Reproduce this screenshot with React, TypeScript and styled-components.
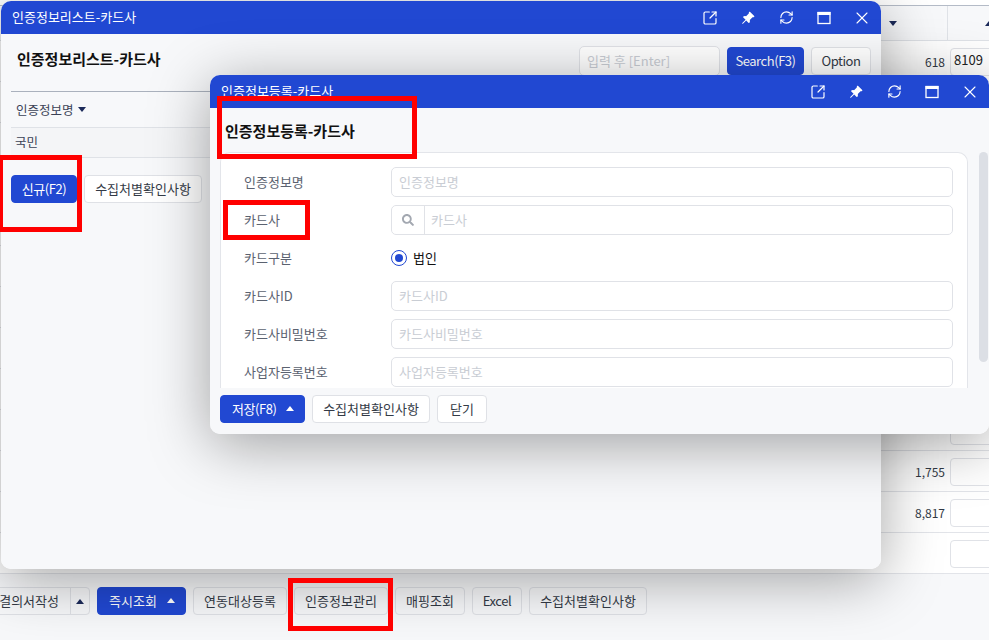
import React from 'react'
import styled, { createGlobalStyle } from 'styled-components'
import { SquareArrowOutUpRight, RefreshCw, X } from 'lucide-react'
import { BsPinAngleFill } from 'react-icons/bs'
import { FaSearch } from 'react-icons/fa'

const GlobalStyle = createGlobalStyle`
  html, body { margin: 0; padding: 0; height: 100%; overflow: hidden; background: #fff; }
  * { box-sizing: border-box; }
  body, input, button { font-family: "Noto Sans CJK KR", "Noto Sans", sans-serif; font-size: 13px; }
`

const Page = styled.div`
  position: relative;
  width: 989px;
  height: 640px;
  overflow: hidden;
  background: #fff;
  color: #333a46;
`

const Grid = styled.div`
  padding-top: 5px;
  display: flex;
  flex-direction: column;
`

const GridHeader = styled.div`
  height: 36px;
  display: flex;
  justify-content: flex-end;
  background: #f7f8fa;
  border-top: 1px solid #b4bbc7;
  border-bottom: 1px solid #dfe2e7;
`

const HeaderCell = styled.div<{ $w: number; $pad: number }>`
  width: ${p => p.$w}px;
  display: flex;
  align-items: center;
  padding-left: ${p => p.$pad}px;
  overflow: hidden;
  & + & { border-left: 1px solid #dfe2e7; }
`

const GridRow = styled.div`
  height: 41px;
  display: flex;
  justify-content: flex-end;
  align-items: center;
  gap: 5px;
  border-bottom: 1px solid #e2e4e9;
  font-size: 12px;
  padding-top: 1px;
`

const GridInput = styled.input`
  width: 46px;
  height: 28px;
  margin-right: -7px;
  padding: 0 3px 4px;
  border: 1px solid #e0e2e7;
  border-radius: 4px;
  background: #fff;
  color: #222;
  outline: none;
`

const BottomBar = styled.div`
  height: 66px;
  display: flex;
  align-items: flex-start;
  gap: 7px;
  padding: 13px 0 0 0;
  background: #f7f8fa;
`

const Win = styled.section<{ $x: number; $y: number; $w: number; $h: number }>`
  position: absolute;
  left: ${p => p.$x}px;
  top: ${p => p.$y}px;
  width: ${p => p.$w}px;
  height: ${p => p.$h}px;
  display: flex;
  flex-direction: column;
  background: #f7f8fa;
  border-radius: 10px;
  overflow: hidden;
`

const WinShadow = styled(Win)`
  overflow: visible;
  background: transparent;
  box-shadow: 0 10px 60px rgba(0, 0, 0, 0.36);
`

const TitleBar = styled.header`
  flex: none;
  height: 33px;
  display: flex;
  align-items: center;
  justify-content: space-between;
  padding: 0 9px 0 11px;
  background: #2148d2;
  color: #fff;
  font-size: 13px;
`

const TitleText = styled.span`
  margin-top: -2px;
`

const WinIcons = styled.div`
  display: flex;
  align-items: center;
  gap: 18px;
`

const IconBox = styled.span`
  width: 20px;
  height: 20px;
  display: flex;
  align-items: center;
  justify-content: center;
  color: #fff;
`

const ListTop = styled.div`
  display: flex;
  align-items: flex-start;
  justify-content: space-between;
  padding: 13px 10px 0 16px;
  height: 57px;
`

const PageTitle = styled.h2`
  margin: 0;
  font-size: 15px;
  font-weight: 700;
  color: #111;
  line-height: 24px;
`

const SearchBox = styled.div`
  display: flex;
  gap: 7px;
`

const TextInput = styled.input<{ $w?: number }>`
  width: ${p => (p.$w ? `${p.$w}px` : '100%')};
  height: 30px;
  padding: 0 7px 2px;
  border: 1px solid #e0e2e7;
  border-radius: 5px;
  background: #fff;
  outline: none;
  &::placeholder { color: #c9cdd4; }
`

const SearchInput = styled(TextInput)`
  margin-top: -1px;
`

const Btn = styled.button<{ $primary?: boolean; $caret?: boolean; $tight?: boolean; $w: number }>`
  flex: none;
  width: ${p => p.$w}px;
  height: 28px;
  padding: ${p => (p.$caret ? '0 10px 2px 11px' : '0 0 2px')};
  display: flex;
  align-items: center;
  justify-content: ${p => (p.$caret ? 'space-between' : 'center')};
  border-radius: 4px;
  border: 1px solid ${p => (p.$primary ? '#2148d2' : '#dfe1e6')};
  background: ${p => (p.$primary ? '#2148d2' : '#fff')};
  color: ${p => (p.$primary ? '#fff' : '#333a46')};
  font-size: 13px;
  letter-spacing: ${p => (p.$tight ? '-0.45px' : '0')};
`

const BarBtn = styled(Btn)`
  background: ${p => (p.$primary ? '#2148d2' : '#f7f8fa')};
`

const Split = styled.div`
  flex: none;
  display: flex;
  width: 100px;
  margin-left: -10px;
  height: 28px;
  border: 1px solid #dfe1e6;
  border-radius: 4px;
  background: #f7f8fa;
  font-size: 13px;
`

const SplitMain = styled.span`
  flex: 1;
  display: flex;
  align-items: center;
  justify-content: flex-end;
  padding: 0 11px 2px 0;
  white-space: nowrap;
`

const SplitCaret = styled.span`
  width: 19px;
  display: flex;
  align-items: center;
  justify-content: center;
  border-left: 1px solid #dfe1e6;
`

const Caret = styled.i<{ $light?: boolean; $down?: boolean }>`
  display: inline-block;
  flex: none;
  width: 0;
  height: 0;
  border-left: 4.5px solid transparent;
  border-right: 4.5px solid transparent;
  ${p => (p.$down ? 'border-top' : 'border-bottom')}: 5px solid ${p => (p.$light ? '#fff' : '#1c2a5a')};
`

const Table = styled.div`
  margin: 0 10px 0 10px;
  border-top: 1px solid #aab1bd;
`

const Th = styled.div`
  height: 36px;
  display: flex;
  align-items: center;
  gap: 4px;
  padding-left: 5px;
  background: #f7f8fa;
  border-bottom: 1px solid #dfe2e7;
  color: #3b4256;
  font-size: 12.5px;
`

const Td = styled.div`
  height: 30px;
  display: flex;
  align-items: center;
  padding: 0 0 2px 4px;
  background: #f4f5f7;
  border-bottom: 1px solid #dfe2e7;
  color: #3b4256;
  font-size: 12.5px;
`

const Actions = styled.div`
  display: flex;
  gap: 7px;
  padding: 17px 0 0 10px;
`

const FormHead = styled.div`
  height: 44px;
  flex: none;
  display: flex;
  align-items: center;
  padding: 1px 0 0 15px;
`

const FormArea = styled.div`
  position: relative;
  flex: none;
  height: 236px;
  padding: 0 21px 0 10px;
`

const Panel = styled.div`
  height: 236px;
  overflow: hidden;
  padding: 14px 14px 0 23px;
  background: #fff;
  border: 1px solid #e3e5ea;
  border-bottom: 0;
  border-radius: 10px 10px 0 0;
`

const Thumb = styled.div`
  position: absolute;
  right: 1px;
  top: 0;
  width: 9px;
  height: 210px;
  border-radius: 5px;
  background: #dcdfe5;
`

const Field = styled.div`
  display: grid;
  grid-template-columns: 147px 1fr;
  align-items: center;
  height: 30px;
  margin-bottom: 8px;
  color: #5b6270;
`

const FieldLabel = styled.span`
  padding-bottom: 2px;
`

const LookupBox = styled.div`
  height: 30px;
  display: flex;
  align-items: stretch;
  border: 1px solid #e0e2e7;
  border-radius: 5px;
  background: #fff;
`

const LookupIcon = styled.span`
  width: 33px;
  display: flex;
  align-items: center;
  justify-content: center;
  border-right: 1px solid #e0e2e7;
  color: #a3a8b1;
`

const LookupInput = styled.input`
  flex: 1;
  min-width: 0;
  padding: 0 6px 2px;
  border: 0;
  background: transparent;
  outline: none;
  &::placeholder { color: #c9cdd4; }
`

const RadioLabel = styled.label`
  display: flex;
  align-items: center;
  gap: 6px;
  color: #111;
`

const RadioText = styled.span`
  padding-bottom: 2px;
`

const RadioDot = styled.span`
  width: 16px;
  height: 16px;
  display: flex;
  align-items: center;
  justify-content: center;
  border: 1px solid #2148d2;
  border-radius: 50%;
  background: #fff;
  &::after {
    content: '';
    width: 8px;
    height: 8px;
    border-radius: 50%;
    background: #2148d2;
  }
`

const Footer = styled.div`
  display: flex;
  gap: 7px;
  padding: 7px 0 0 10px;
`

const Highlight = styled.div<{ $x: number; $y: number; $w: number; $h: number }>`
  position: absolute;
  left: ${p => p.$x}px;
  top: ${p => p.$y}px;
  width: ${p => p.$w}px;
  height: ${p => p.$h}px;
  border: 5px solid #ff0000;
`

const MaxIcon = () => (
  <svg width="14" height="14" viewBox="0 0 14 14" fill="none">
    <rect x="1" y="1.5" width="12" height="11" stroke="#fff" strokeWidth="1.3" />
    <rect x="0.5" y="1" width="13" height="3" fill="#fff" />
  </svg>
)

const WindowButtons = () => (
  <WinIcons>
    <IconBox><SquareArrowOutUpRight size={16} strokeWidth={1.8} /></IconBox>
    <IconBox><BsPinAngleFill size={14} /></IconBox>
    <IconBox><RefreshCw size={15} strokeWidth={1.8} /></IconBox>
    <IconBox><MaxIcon /></IconBox>
    <IconBox><X size={24} strokeWidth={1.3} /></IconBox>
  </WinIcons>
)

const formFields = [
  { label: '카드사ID', placeholder: '카드사ID' },
  { label: '카드사비밀번호', placeholder: '카드사비밀번호' },
  { label: '사업자등록번호', placeholder: '사업자등록번호' },
]

const rows: { amount?: string; input?: string }[] = [
  { amount: '618', input: '8109' },
  ...Array.from({ length: 9 }, () => ({})),
  { amount: '1,755' },
  { amount: '8,817' },
  {},
]

export default function App() {
  return (
    <Page>
      <GlobalStyle />

      <Grid>
        <GridHeader>
          <HeaderCell $w={66} $pad={8}><Caret $down /></HeaderCell>
          <HeaderCell $w={42} $pad={37}><Caret /></HeaderCell>
        </GridHeader>
        {rows.map((row, i) => (
          <GridRow key={i}>
            {row.amount}
            <GridInput defaultValue={row.input} />
          </GridRow>
        ))}
      </Grid>

      <BottomBar>
        <Split>
          <SplitMain>결의서작성</SplitMain>
          <SplitCaret><Caret /></SplitCaret>
        </Split>
        <BarBtn $primary $caret $w={89}>즉시조회 <Caret $light /></BarBtn>
        <BarBtn $w={94}>연동대상등록</BarBtn>
        <BarBtn $w={94}>인증정보관리</BarBtn>
        <BarBtn $w={70}>매핑조회</BarBtn>
        <BarBtn $tight $w={50}>Excel</BarBtn>
        <BarBtn $w={118}>수집처별확인사항</BarBtn>
      </BottomBar>

      <WinShadow $x={1} $y={1} $w={880} $h={568} />
      <Win $x={1} $y={1} $w={880} $h={568}>
        <TitleBar>
          <TitleText>인증정보리스트-카드사</TitleText>
          <WindowButtons />
        </TitleBar>
        <ListTop>
          <PageTitle>인증정보리스트-카드사</PageTitle>
          <SearchBox>
            <SearchInput $w={141} placeholder="입력 후 [Enter]" />
            <Btn $primary $tight $w={77}>Search(F3)</Btn>
            <Btn $tight $w={60}>Option</Btn>
          </SearchBox>
        </ListTop>
        <Table>
          <Th>인증정보명 <Caret $down /></Th>
          <Td>국민</Td>
        </Table>
        <Actions>
          <Btn $primary $tight $w={66}>신규(F2)</Btn>
          <Btn $w={118}>수집처별확인사항</Btn>
        </Actions>
      </Win>

      <WinShadow $x={210} $y={75} $w={779} $h={359} />
      <Win $x={210} $y={75} $w={779} $h={359}>
        <TitleBar>
          <TitleText>인증정보등록-카드사</TitleText>
          <WindowButtons />
        </TitleBar>
        <FormHead>
          <PageTitle>인증정보등록-카드사</PageTitle>
        </FormHead>
        <FormArea>
          <Panel>
            <Field>
              <FieldLabel>인증정보명</FieldLabel>
              <TextInput placeholder="인증정보명" />
            </Field>
            <Field>
              <FieldLabel>카드사</FieldLabel>
              <LookupBox>
                <LookupIcon><FaSearch size={12} /></LookupIcon>
                <LookupInput placeholder="카드사" />
              </LookupBox>
            </Field>
            <Field>
              <FieldLabel>카드구분</FieldLabel>
              <RadioLabel><RadioDot /><RadioText>법인</RadioText></RadioLabel>
            </Field>
            {formFields.map(f => (
              <Field key={f.label}>
                <FieldLabel>{f.label}</FieldLabel>
                <TextInput placeholder={f.placeholder} />
              </Field>
            ))}
          </Panel>
          <Thumb />
        </FormArea>
        <Footer>
          <Btn $primary $caret $tight $w={85}>저장(F8) <Caret $light /></Btn>
          <Btn $w={118}>수집처별확인사항</Btn>
          <Btn $w={50}>닫기</Btn>
        </Footer>
      </Win>

      <Highlight $x={-2} $y={155} $w={84} $h={77} />
      <Highlight $x={217} $y={96} $w={200} $h={63} />
      <Highlight $x={223} $y={200} $w={87} $h={40} />
      <Highlight $x={288} $y={578} $w={105} $h={53} />
    </Page>
  )
}
